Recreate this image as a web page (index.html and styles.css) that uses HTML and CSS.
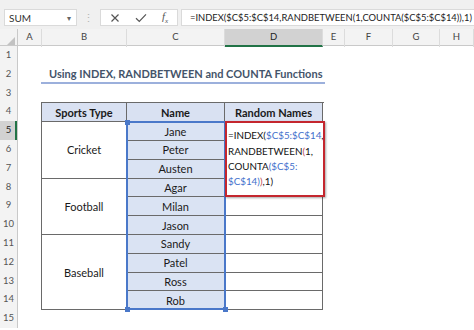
FILE: index.html
```html
<html>
<head>
<title>INDEX RANDBETWEEN COUNTA</title>
<link rel="stylesheet" href="styles.css">
</head>
<body>
<div class="formula-bar">
    <div class="name-box">SUM<span class="caret">&#9662;</span></div>
    <div class="bar-dots">&#8942;</div>
    <div class="fx-box">
        <svg class="bar-icon" width="10" height="10" viewBox="0 0 10 10"><path d="M1.5 1.5 L8.5 8.5 M8.5 1.5 L1.5 8.5" stroke="#555" stroke-width="1.2" fill="none"/></svg>
        <svg class="bar-icon" width="12" height="10" viewBox="0 0 12 10"><path d="M1 5.2 L4.3 8.4 L11 1.4" stroke="#555" stroke-width="1.2" fill="none"/></svg>
        <span class="fx">f<sub>x</sub></span>
    </div>
    <div class="formula-input">=INDEX($C$5:$C$14,RANDBETWEEN(1,COUNTA($C$5:$C$14)),1)</div>
</div>

<div class="col-heads">
    <div class="corner"></div>
    <div>A</div>
    <div>B</div>
    <div>C</div>
    <div class="active">D</div>
    <div>E</div>
    <div>F</div>
    <div>G</div>
    <div>H</div>
</div>

<div class="sheet">
    <div class="row-heads">
        <div>1</div><div>2</div><div>3</div><div>4</div>
        <div class="active">5</div>
        <div>6</div><div>7</div><div>8</div><div>9</div><div>10</div>
        <div>11</div><div>12</div><div>13</div><div>14</div><div>15</div>
    </div>

    <div class="cells">
        <div class="blank-row"></div>
        <div class="title">Using INDEX, RANDBETWEEN and COUNTA Functions</div>
        <div class="blank-row"></div>

        <div class="data">
            <div class="cell head">Sports Type</div>
            <div class="cell head">Name</div>
            <div class="cell head">Random Names</div>

            <div class="cell sport span3">Cricket</div>
            <div class="cell name">Jane</div><div class="cell"></div>
            <div class="cell name">Peter</div><div class="cell"></div>
            <div class="cell name">Austen</div><div class="cell"></div>

            <div class="cell sport span3">Football</div>
            <div class="cell name">Agar</div><div class="cell"></div>
            <div class="cell name">Milan</div><div class="cell"></div>
            <div class="cell name">Jason</div><div class="cell"></div>

            <div class="cell sport span4">Baseball</div>
            <div class="cell name">Sandy</div><div class="cell"></div>
            <div class="cell name">Patel</div><div class="cell"></div>
            <div class="cell name">Ross</div><div class="cell"></div>
            <div class="cell name">Rob</div><div class="cell"></div>

            <!-- range picked up by the formula being typed -->
            <div class="ref-range">
                <span class="handle tl"></span>
                <span class="handle bl"></span>
                <span class="handle br"></span>
            </div>

            <!-- D5 in edit mode, wraps over D5:D8 -->
            <div class="edit-box">
                <div>=INDEX(<span class="ref">$C$5:$C$14</span>,</div>
                <div>RANDBETWEEN<span class="p1">(</span>1,</div>
                <div>COUNTA<span class="ref">($C$5:</span></div>
                <div><span class="ref">$C$14)</span><span class="p1">)</span>,1)</div>
            </div>
        </div>
    </div>
</div>
</body>
</html>
```

FILE: styles.css
```css
body {
    margin: 0;
    width: 474px;
    height: 330px;
    overflow: hidden;
    background: #fff;
    font-family: Lato, "Open Sans", sans-serif;
    color: #111;
}

/* formula bar */
.formula-bar {
    height: 29px;
    box-sizing: border-box;
    padding-top: 9px;
    background: #f0f0f0;
    display: flex;
    align-items: flex-start;
}
.name-box {
    margin-left: 4px;
    width: 73px;
    height: 17px;
    box-sizing: border-box;
    background: #fff;
    border: 1px solid #dadada;
    font-size: 10px;
    color: #333;
    padding-left: 4px;
    display: flex;
    align-items: center;
    justify-content: space-between;
}
.caret {
    font-size: 8px;
    color: #666;
    padding-right: 5px;
}
.bar-dots {
    width: 23px;
    text-align: center;
    font-size: 11px;
    line-height: 17px;
    color: #b5b5b5;
}
.fx-box {
    width: 78px;
    height: 17px;
    box-sizing: border-box;
    background: #fff;
    border: 1px solid #dadada;
    display: flex;
    align-items: center;
    padding-left: 9px;
    gap: 15px;
}
.fx {
    font-family: "Liberation Serif", serif;
    font-style: italic;
    font-size: 11px;
    color: #555;
}
.fx sub {
    font-size: 7px;
}
.formula-input {
    margin-left: 3px;
    flex: 1;
    height: 17px;
    box-sizing: border-box;
    background: #fff;
    border: 1px solid #dadada;
    border-right: none;
    padding-left: 8px;
    font-size: 9.4px;
    line-height: 15px;
    color: #222;
    white-space: nowrap;
}

/* column headers */
.col-heads {
    display: grid;
    grid-template-columns: 18px 24px 85px 98px 98px 22px 48px 47px 1fr;
    height: 17px;
    background: #f3f3f3;
    border-bottom: 1px solid #c9c9c9;
    box-sizing: border-box;
}
.col-heads div {
    border-right: 1px solid #dcdcdc;
    font-size: 9.5px;
    line-height: 16px;
    text-align: center;
    color: #444;
}
.col-heads .corner {
    position: relative;
    border-right: 1px solid #c9c9c9;
}
.col-heads .corner::after {
    content: "";
    position: absolute;
    right: 2px;
    bottom: 2px;
    border-left: 8px solid transparent;
    border-bottom: 8px solid #c2c2c2;
}
.col-heads .active {
    background: #d2d2d2;
    border-bottom: 2px solid #217346;
    color: #222;
}

/* sheet body */
.sheet {
    display: flex;
}
.row-heads {
    width: 18px;
    flex-shrink: 0;
    background: #f3f3f3;
    border-right: 1px solid #c9c9c9;
    box-sizing: border-box;
}
.row-heads div {
    height: 18.8px;
    font-size: 9.5px;
    line-height: 18.8px;
    text-align: center;
    color: #555;
}
.row-heads .active {
    background: #d2d2d2;
    box-shadow: inset -2px 0 0 #217346;
    color: #222;
}
.cells {
    flex: 1;
    padding-left: 23px;
}
.blank-row {
    height: 18.8px;
}
.title {
    width: 284px;
    height: 18.8px;
    box-sizing: border-box;
    border-bottom: 2px solid #9cb0dc;
    padding-left: 8px;
    font-size: 11px;
    font-weight: bold;
    line-height: 17px;
    color: #44546a;
    white-space: nowrap;
}

/* the data table */
.data {
    position: relative;
    display: grid;
    grid-template-columns: 85px 98px 98px;
    grid-auto-rows: 18.8px;
    width: 282px;
    border-left: 1px solid #6a6a6a;
    border-top: 1px solid #6a6a6a;
}
.cell {
    box-sizing: border-box;
    border-right: 1px solid #6a6a6a;
    border-bottom: 1px solid #6a6a6a;
    font-size: 11px;
    display: flex;
    align-items: center;
    justify-content: center;
    color: #1a1a1a;
}
.cell.head {
    background: #d9e1f2;
    font-weight: bold;
}
.cell.name {
    background: #dae3f3;
}
.span3 {
    grid-row: span 3;
}
.span4 {
    grid-row: span 4;
}

.ref-range {
    position: absolute;
    left: 84px;
    top: 17.8px;
    width: 100px;
    height: 189px;
    box-sizing: border-box;
    border: 2px solid #4a78c9;
}
.handle {
    position: absolute;
    width: 5px;
    height: 5px;
    background: #4a78c9;
}
.handle.tl { left: -3.5px; top: -3.5px; }
.handle.bl { left: -3.5px; bottom: -3.5px; }
.handle.br { right: -3.5px; bottom: -3.5px; }

.edit-box {
    position: absolute;
    left: 183px;
    top: 18px;
    width: 100px;
    height: 76px;
    box-sizing: border-box;
    background: #fff;
    border: 2px solid #c4262e;
    box-shadow: 1px 1px 2px rgba(0, 0, 0, 0.35);
    padding: 5px 0 0 1px;
    font-size: 9.8px;
    line-height: 15.3px;
    white-space: nowrap;
    overflow: hidden;
    color: #111;
}
.ref {
    color: #3f6fcc;
}
.p1 {
    color: #c24a55;
}
```
